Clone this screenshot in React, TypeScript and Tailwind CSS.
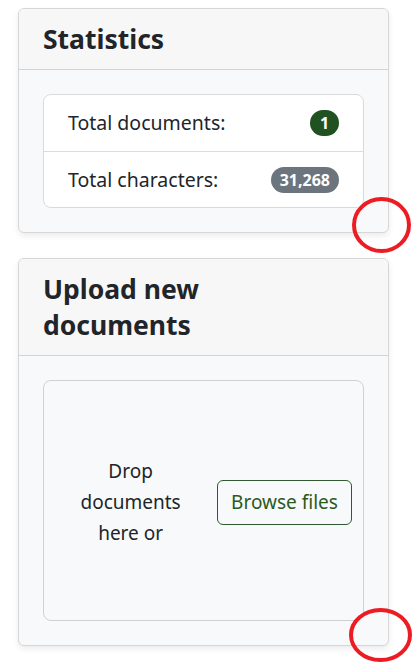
import React from 'react';

const font = { fontFamily: '"Noto Sans", "Open Sans", sans-serif' };

function Card({ title, children }: { title: React.ReactNode; children: React.ReactNode }) {
  return (
    <div className="w-[371px] rounded-[6px] border border-[#d6d6d6] bg-[#f8f9fa] shadow-[0_3px_6px_rgba(0,0,0,0.08)] overflow-hidden">
      <div className="bg-[#f7f7f7] border-b border-[#d3d3d3] px-6 py-3">
        <h3 className="text-[26.5px] leading-[36px] font-bold text-[#212529]">{title}</h3>
      </div>
      <div className="p-6">{children}</div>
    </div>
  );
}

function StatRow({ label, value, badge, first }: { label: string; value: string; badge: string; first?: boolean }) {
  return (
    <div className={`flex items-center justify-between pl-6 pr-[24px] h-[56px] ${first ? '' : 'border-t border-[#dcdcdc]'}`}>
      <span className="text-[19.5px] text-[#212529]">{label}</span>
      <span className={`${badge} h-[26px] min-w-[29px] px-[9px] rounded-full flex items-center justify-center text-white text-[16px] font-bold`}>
        {value}
      </span>
    </div>
  );
}

export default function App() {
  return (
    <div className="relative min-h-[664px] bg-white pl-[18px] pt-[8px]" style={font}>
      <Card title="Statistics">
        <div className="rounded-[8px] border border-[#d9dadc] bg-white">
          <StatRow first label="Total documents:" value="1" badge="bg-[#1f5121]" />
          <StatRow label="Total characters:" value="31,268" badge="bg-[#6c757d]" />
        </div>
      </Card>

      <div className="mt-[25px]">
        <Card title={<>Upload new<br />documents</>}>
          <div className="h-[241px] pt-[4px] rounded-[8px] border border-[#cfd0d2] bg-[#f8f9fa] flex items-center justify-center">
            <div className="w-[151px] px-[24px] text-center text-[19px] leading-[31px] text-[#212529]">
              Drop documents here or
            </div>
            <button className="ml-[11px] h-[45px] px-[13px] rounded-[6px] border border-[#2f5a2f] text-[19px] text-[#2b5a1e] bg-transparent">
              Browse files
            </button>
          </div>
        </Card>
      </div>

      {/* red annotation circles */}
      <svg className="absolute left-0 top-0 pointer-events-none" width="416" height="664" viewBox="0 0 416 664">
        <ellipse cx="381.5" cy="225" rx="27.5" ry="26" fill="none" stroke="#ec1c24" strokeWidth="4" />
        <ellipse cx="380.5" cy="635" rx="29.5" ry="25" fill="none" stroke="#ec1c24" strokeWidth="4" />
      </svg>
    </div>
  );
}
